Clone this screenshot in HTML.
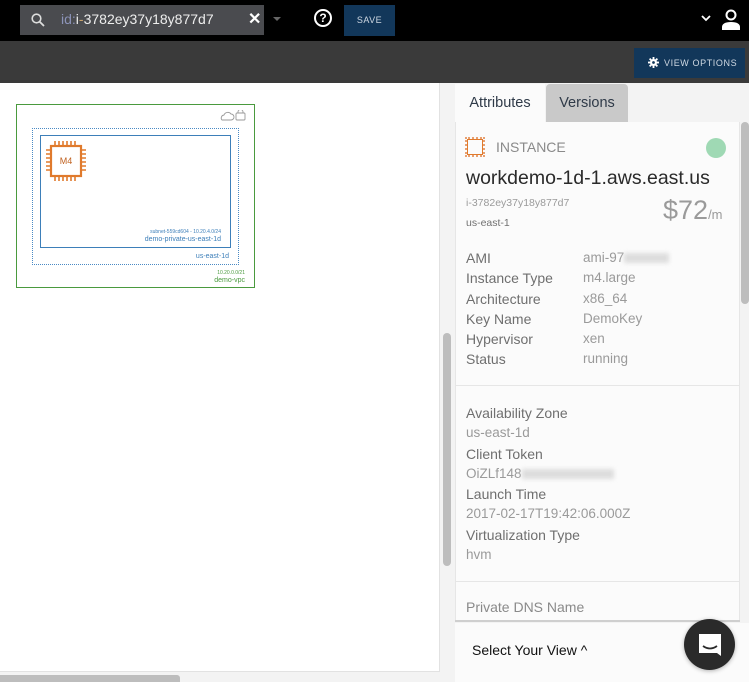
<!DOCTYPE html>
<html><head><meta charset="utf-8">
<style>
*{box-sizing:border-box;margin:0;padding:0}
body{width:749px;height:682px;overflow:hidden;background:#f3f3f3;font-family:"Liberation Sans",sans-serif;position:relative}
.abs{position:absolute}
.top{left:0;top:0;width:749px;height:41px;background:#000}
.bar2{left:0;top:41px;width:749px;height:42px;background:#3a3a3a}
.search{left:20px;top:5px;width:244px;height:30px;background:#4a4b4f}
.canvas{left:0;top:83px;width:440px;height:589px;background:#fff;border-right:1px solid #e2e2e2;border-bottom:1px solid #e2e2e2}
.panel{left:455px;top:122px;width:285px;height:500px;background:#fbfbfb;border-left:1px solid #e6e6e6;border-right:1px solid #e6e6e6}
.lbl{color:#6f6f6f;font-size:14px}
.val{color:#9a9a9a;font-size:13.5px}
.blur{display:inline-block;background:#ddd;filter:blur(2px);height:10px;vertical-align:middle}
</style></head><body>
<div class="abs top"></div>
<div class="abs bar2"></div>
<div class="abs search">
  <svg class="abs" style="left:11px;top:8px" width="14" height="14" viewBox="0 0 14 14"><circle cx="5.5" cy="5.5" r="4.3" fill="none" stroke="#ddd" stroke-width="1.6"/><line x1="8.7" y1="8.7" x2="13" y2="13" stroke="#ddd" stroke-width="1.8"/></svg>
  <div class="abs" style="left:41px;top:6px;font-size:14px;color:#eee;white-space:nowrap"><span style="color:#8c93b8">id:</span>i<span style="color:#c9a36a">-</span>3782ey37y18y877d7</div>
  <div class="abs" style="left:228px;top:4px;font-size:16px;color:#fff;font-weight:bold">✕</div>
</div>
<div class="abs" style="left:273px;top:17px;width:0;height:0;border-left:4px solid transparent;border-right:4px solid transparent;border-top:4px solid #666"></div>
<div class="abs" style="left:314px;top:9px;width:18px;height:18px;border:2px solid #fff;border-radius:50%;color:#fff;font-size:12px;font-weight:bold;text-align:center;line-height:14px">?</div>
<div class="abs" style="left:344px;top:5px;width:51px;height:31px;background:#12375a;color:#cfd8e2;font-size:9px;text-align:center;line-height:31px;letter-spacing:.5px">SAVE</div>
<svg class="abs" style="left:701px;top:15px" width="10" height="7" viewBox="0 0 10 7"><path d="M1 1l4 4 4-4" fill="none" stroke="#fff" stroke-width="1.8"/></svg>
<svg class="abs" style="left:721px;top:9px" width="20" height="22" viewBox="0 0 20 22"><circle cx="10" cy="6" r="4.5" fill="none" stroke="#fff" stroke-width="2"/><path d="M1 21v-3c0-3 3-5 9-5s9 2 9 5v3z" fill="#fff"/></svg>
<div class="abs" style="left:634px;top:48px;width:111px;height:30px;background:#12375a;color:#cfd8e2;font-size:9px;line-height:30px;letter-spacing:.6px;padding-left:30px">VIEW OPTIONS</div>
<svg class="abs" style="left:648px;top:57px" width="11" height="11" viewBox="0 0 12 12"><g fill="#fff"><circle cx="6" cy="6" r="3.8"/><rect x="5" y="0" width="2" height="12"/><rect x="0" y="5" width="12" height="2"/><rect x="5" y="0" width="2" height="12" transform="rotate(45 6 6)"/><rect x="5" y="0" width="2" height="12" transform="rotate(-45 6 6)"/></g><circle cx="6" cy="6" r="1.5" fill="#12375a"/></svg>

<div class="abs canvas">
  <div class="abs" style="left:16px;top:21px;width:239px;height:184px;border:1px solid #4a9a3e"></div>
  <svg class="abs" style="left:220px;top:27px" width="28" height="11" viewBox="0 0 28 11"><path d="M2 10h9a3 3 0 0 0 0-6 4 4 0 0 0-7 1 3 3 0 0 0-2 5z" fill="none" stroke="#999" stroke-width=".9"/><rect x="16" y="3" width="9" height="7" rx="1" fill="none" stroke="#999" stroke-width=".9"/><path d="M18 3V2a2.5 2.5 0 0 1 5 0v1" fill="none" stroke="#999" stroke-width=".9"/></svg>
  <div class="abs" style="left:32px;top:45px;width:207px;height:137px;border:1px dotted #4a8ac4"></div>
  <div class="abs" style="left:40px;top:52px;width:191px;height:113px;border:1px solid #3d7fb9"></div>
  <svg class="abs" style="left:45px;top:57px" width="42" height="42" viewBox="0 0 42 42">
    <g stroke="#e07a2c" stroke-width="1.6">
      <path d="M10 1v6M14 1v6M18 1v6M22 1v6M26 1v6M30 1v6M10 35v6M14 35v6M18 35v6M22 35v6M26 35v6M30 35v6M1 10h6M1 14h6M1 18h6M1 22h6M1 26h6M1 30h6M35 10h6M35 14h6M35 18h6M35 22h6M35 26h6M35 30h6"/>
    </g>
    <rect x="6" y="6" width="30" height="30" fill="#fff" stroke="#e07a2c" stroke-width="2.2"/>
    <text x="21" y="24" font-size="9" fill="#c0601e" text-anchor="middle" font-family="Liberation Sans">M4</text>
  </svg>
  <div class="abs" style="left:100px;top:146px;width:121px;text-align:right;font-size:5px;color:#3d7fb9">subnet-559cd604 - 10.20.4.0/24</div>
  <div class="abs" style="left:100px;top:153px;width:121px;text-align:right;font-size:7px;color:#3d7fb9">demo-private-us-east-1d</div>
  <div class="abs" style="left:150px;top:170px;width:79px;text-align:right;font-size:7px;color:#3d7fb9">us-east-1d</div>
  <div class="abs" style="left:150px;top:187px;width:95px;text-align:right;font-size:5px;color:#4a9a3e">10.20.0.0/21</div>
  <div class="abs" style="left:150px;top:194px;width:95px;text-align:right;font-size:7px;color:#4a9a3e">demo-vpc</div>
</div>
<div class="abs" style="left:443px;top:333px;width:8px;height:233px;background:#bdbdbd;border-radius:4px"></div>
<div class="abs" style="left:0;top:675px;width:180px;height:7px;background:#bdbdbd;border-radius:0 3px 0 0"></div>

<div class="abs" style="left:455px;top:84px;width:90px;height:38px;background:#fbfbfb;color:#2f3a48;font-size:14.5px;text-align:center;line-height:38px">Attributes</div>
<div class="abs" style="left:546px;top:84px;width:82px;height:38px;background:#c9c9c9;border-radius:4px 4px 0 0;color:#2f3a48;font-size:14.5px;text-align:center;line-height:38px">Versions</div>

<div class="abs panel">
  <div class="abs" style="left:11px;top:17px;width:16px;height:16px;border:1.5px solid #e07a2c;outline:2px dotted #e8a070;outline-offset:0"></div>
  <div class="abs" style="left:40px;top:17px;font-size:14px;color:#8a8a8a">INSTANCE</div>
  <div class="abs" style="left:250px;top:16px;width:20px;height:20px;border-radius:50%;background:#9fd9b4"></div>
  <div class="abs" style="left:10px;top:45px;font-size:19.5px;color:#2a2a2a">workdemo-1d-1.aws.east.us</div>
  <div class="abs" style="left:10px;top:75px;font-size:10.5px;color:#9a9a9a">i-3782ey37y18y877d7</div>
  <div class="abs" style="left:10px;top:95px;font-size:10.5px;color:#707070">us-east-1</div>
  <div class="abs" style="left:207px;top:73px;font-size:27px;color:#9a9a9a">$72<span style="font-size:13px">/m</span></div>
  <div class="abs" style="left:10px;top:126px;line-height:20.3px" >
    <div class="lbl">AMI</div><div class="lbl">Instance Type</div><div class="lbl">Architecture</div><div class="lbl">Key Name</div><div class="lbl">Hypervisor</div><div class="lbl">Status</div>
  </div>
  <div class="abs" style="left:127px;top:126px;line-height:20.3px">
    <div class="val">ami-97<span class="blur" style="width:45px"></span></div><div class="val">m4.large</div><div class="val">x86_64</div><div class="val">DemoKey</div><div class="val">xen</div><div class="val">running</div>
  </div>
  <div class="abs" style="left:0;top:263px;width:283px;height:1px;background:#e6e6e6"></div>
  <div class="abs" style="left:10px;top:281px;line-height:20.3px">
    <div class="lbl">Availability Zone</div><div class="val">us-east-1d</div>
    <div class="lbl">Client Token</div><div class="val">OiZLf148<span class="blur" style="width:92px"></span></div>
    <div class="lbl">Launch Time</div><div class="val">2017-02-17T19:42:06.000Z</div>
    <div class="lbl">Virtualization Type</div><div class="val">hvm</div>
  </div>
  <div class="abs" style="left:0;top:459px;width:283px;height:1px;background:#e6e6e6"></div>
  <div class="abs" style="left:10px;top:477px;font-size:14px;color:#8a8a8a">Private DNS Name</div>
  <div class="abs" style="left:-1px;top:498px;width:285px;height:2px;background:#cfcfcf"></div>
</div>
<div class="abs" style="left:741px;top:122px;width:8px;height:182px;background:#bdbdbd;border-radius:4px"></div>
<div class="abs" style="left:455px;top:623px;width:294px;height:59px;background:#fbfbfb"></div>
<div class="abs" style="left:472px;top:642px;font-size:14px;color:#111">Select Your View ^</div>
<div class="abs" style="left:684px;top:619px;width:51px;height:51px;border-radius:50%;background:#2a2a2a;box-shadow:0 1px 4px rgba(0,0,0,.3)"></div>
<svg class="abs" style="left:697px;top:632px" width="26" height="26" viewBox="0 0 26 26"><path d="M2 2h22v22l-4-3H2z" fill="#fff"/><path d="M6 14q7 5 14 0" fill="none" stroke="#2a2a2a" stroke-width="1.8"/></svg>
</body></html>
